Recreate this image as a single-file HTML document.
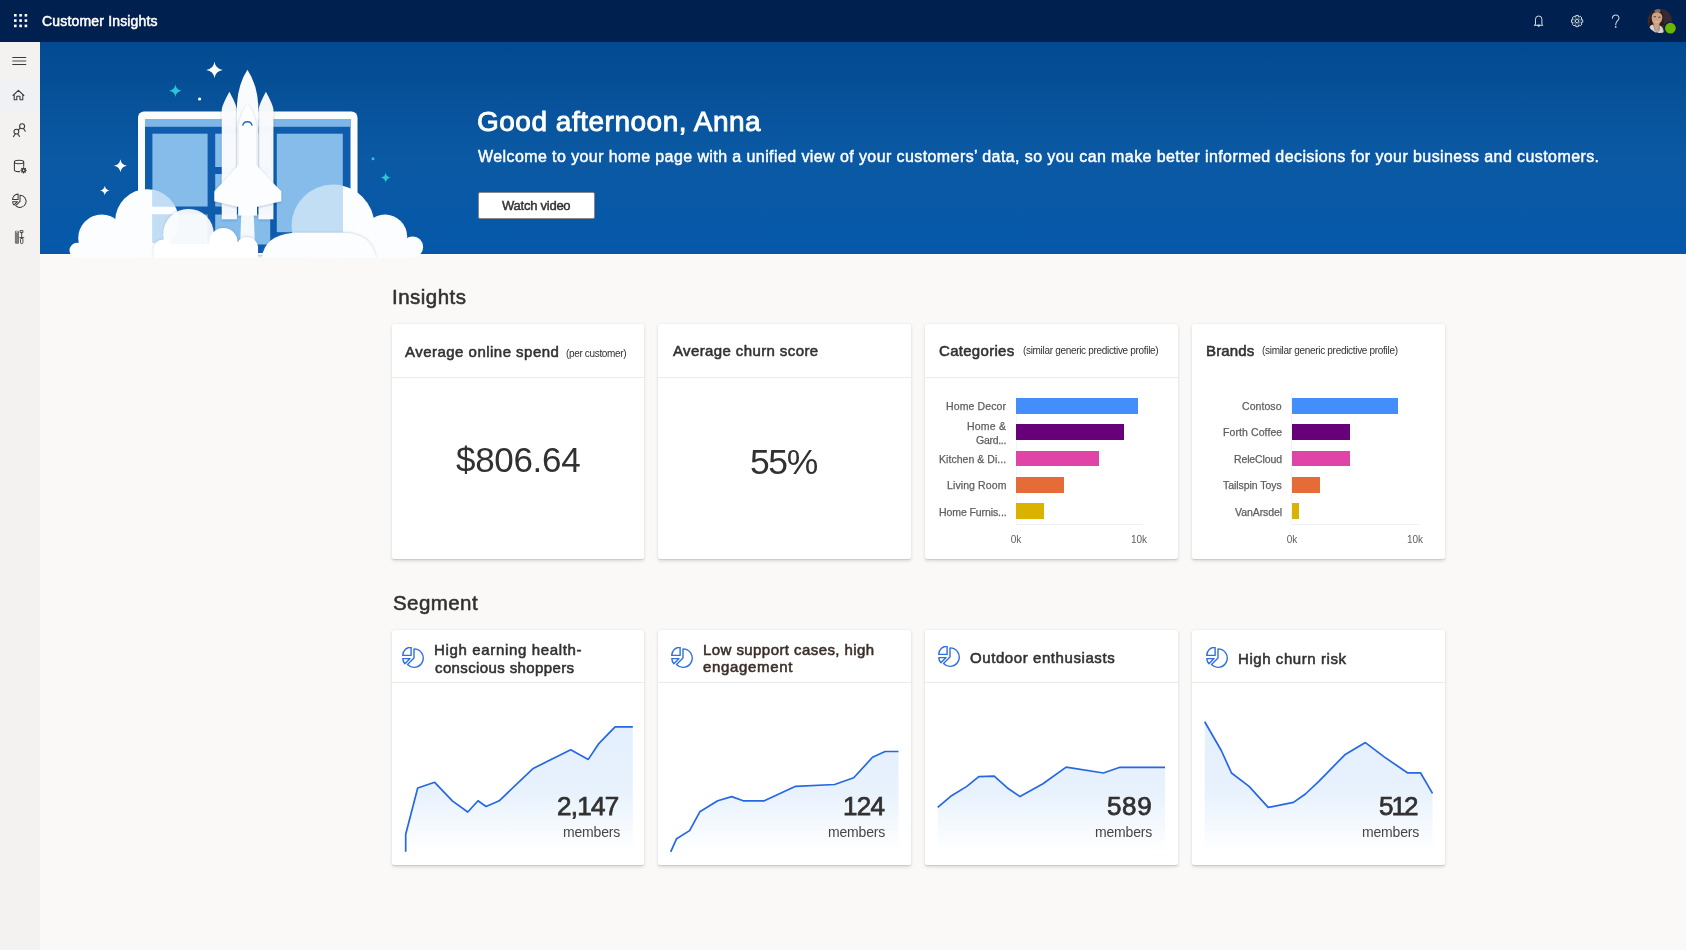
<!DOCTYPE html>
<html><head><meta charset="utf-8">
<style>
*{box-sizing:border-box;margin:0;padding:0}
html,body{width:1686px;height:950px;overflow:hidden;background:#faf9f8;font-family:"Liberation Sans",sans-serif;color:#323130}
.abs{position:absolute}
#top{position:absolute;left:0;top:0;width:1686px;height:42px;background:#00214f}
#nav{position:absolute;left:0;top:42px;width:39.5px;height:908px;background:#f3f2f1}
#navsel{position:absolute;left:0;top:36.4px;width:39.5px;height:35px;background:#eff1f4}
#hero{position:absolute;left:39.5px;top:42px;width:1646.5px;height:211.5px;background:linear-gradient(#034a90 0%,#0b59a4 55%,#0558a9 100%)}
.t{position:absolute;white-space:nowrap;line-height:1;will-change:transform}
.card{position:absolute;background:#fff;box-shadow:0 1.6px 3.6px rgba(0,0,0,.132),0 0.3px 0.9px rgba(0,0,0,.085);border-radius:2px}
.card .hd{position:absolute;left:0;right:0;top:0;border-bottom:1px solid #edebe9}
</style></head><body>
<div id="top"></div>
<div id="nav"><div id="navsel"></div></div>
<div id="hero"></div>
<svg class="abs" style="left:40px;top:42px" width="420" height="222" viewBox="40 42 420 222"><defs><clipPath id="pan"><rect x="152.4" y="133.7" width="55.2" height="72.8"/><rect x="152.4" y="214.5" width="55.2" height="30"/><rect x="215.2" y="133.7" width="55" height="33.3"/><rect x="215.2" y="174" width="55" height="32.5"/><rect x="215.2" y="214.5" width="55" height="30"/><rect x="276.8" y="133.7" width="66" height="98.5"/></clipPath><clipPath id="floor"><rect x="40" y="42" width="420" height="215.7"/></clipPath><filter id="sh" x="-10%" y="-10%" width="120%" height="130%"><feDropShadow dx="0" dy="0.8" stdDeviation="1.1" flood-color="#002e66" flood-opacity="0.30"/></filter><filter id="sh2" x="-10%" y="-20%" width="120%" height="140%"><feDropShadow dx="0" dy="-0.5" stdDeviation="1.0" flood-color="#5c7fa8" flood-opacity="0.35"/></filter></defs><g clip-path="url(#floor)"><path d="M214.5,61.7 Q215.5824,68.8176 222.7,69.9 Q215.5824,70.98240000000001 214.5,78.10000000000001 Q213.4176,70.98240000000001 206.3,69.9 Q213.4176,68.8176 214.5,61.7 Z" fill="#fff"/><path d="M175.4,84.5 Q176.2184,89.8816 181.6,90.7 Q176.2184,91.5184 175.4,96.9 Q174.5816,91.5184 169.20000000000002,90.7 Q174.5816,89.8816 175.4,84.5 Z" fill="#2bc3d6"/><path d="M120.4,159.3 Q121.25800000000001,164.942 126.9,165.8 Q121.25800000000001,166.65800000000002 120.4,172.3 Q119.542,166.65800000000002 113.9,165.8 Q119.542,164.942 120.4,159.3 Z" fill="#fff"/><path d="M104.8,185.7 Q105.4336,189.8664 109.6,190.5 Q105.4336,191.1336 104.8,195.3 Q104.1664,191.1336 100.0,190.5 Q104.1664,189.8664 104.8,185.7 Z" fill="#fff"/><path d="M385.7,172.4 Q386.3864,176.9136 390.9,177.6 Q386.3864,178.2864 385.7,182.79999999999998 Q385.0136,178.2864 380.5,177.6 Q385.0136,176.9136 385.7,172.4 Z" fill="#2bc3d6"/><circle cx="199.6" cy="99" r="1.6" fill="#fff"/><circle cx="373" cy="158.8" r="1.5" fill="#2bc3d6"/><path d="M138,255 V117.5 a6,6 0 0 1 6,-6 H351.5 a6,6 0 0 1 6,6 V255 Z" fill="#fbfcfe" filter="url(#sh)"/><rect x="145" y="119" width="205.5" height="134" fill="#0f5cad"/><rect x="145" y="119" width="205.5" height="7.8" fill="#7fb6e8"/><g fill="#fcfdfe"><circle cx="147" cy="221" r="31.8"/><circle cx="333" cy="226" r="41.5"/></g><g fill="#85bcea"><rect x="152.4" y="133.7" width="55.2" height="72.8"/><rect x="152.4" y="214.5" width="55.2" height="30"/><rect x="215.2" y="133.7" width="55" height="33.3"/><rect x="215.2" y="174" width="55" height="32.5"/><rect x="215.2" y="214.5" width="55" height="30"/><rect x="276.8" y="133.7" width="66" height="98.5"/></g><g clip-path="url(#pan)" fill="#ffffff" fill-opacity="0.5"><circle cx="147" cy="221" r="31.8"/><circle cx="333" cy="226" r="41.5"/></g><g filter="url(#sh)" fill="#fbfcfe" fill-opacity="0.965"><path d="M221.8,219.3 V109 Q222.4,104.5 229.4,91.7 Q236.2,104.5 236.9,109 V219.3 Z"/><path d="M258.5,219.3 V109 Q259.2,104.5 265.9,91.7 Q272.8,104.5 273.4,109 V219.3 Z"/></g><g filter="url(#sh)"><path d="M237.0,200 V104 Q238.2,84 247.4,69.8 Q256.8,84 258.2,104 V200 Z" fill="#fafbfd"/></g><g filter="url(#sh)"><path d="M247.4,104.6 Q254.6,112 256.4,127 V164.5 Q262,172 281.3,191.2 V201.3 L257.0,206.8 V215.6 H238.2 V206.8 L214.3,201.3 V191.2 Q233,172 238.6,164.5 V127 Q240.4,112 247.4,104.6 Z" fill="#fcfdfe"/></g><path d="M242.7,125.6 A4.8,4.8 0 0 1 252.1,125.6" fill="none" stroke="#1b6ec2" stroke-width="1.4"/><path d="M241.2,215 L239.5,262 H255.5 L253.8,215 Z" fill="#fff" fill-opacity="0.9"/><g fill="#fcfdfe"><circle cx="101.7" cy="238" r="23.5"/><circle cx="77.3" cy="250.6" r="7.8"/><rect x="77.3" y="243" width="93" height="20"/></g><g fill="#fcfdfe"><circle cx="385" cy="236.8" r="22.2"/><circle cx="412.6" cy="247" r="10.6"/><rect x="340" y="240" width="74" height="20"/></g><g filter="url(#sh2)"><path d="M262,258 Q264,236 292,233 H345 Q372,234 376,258 Z" fill="#fcfdfe"/></g><g filter="url(#sh2)"><circle cx="188.5" cy="234.2" r="25.3" fill="#ffffff" fill-opacity="0.91"/><path d="M153.5,258 V249 A9.5,9.5 0 0 1 172.5,249 H174 V258 Z M209.4,258 V242 A14,14 0 0 1 237.4,242 V258 Z M236,258 V248 A11,11 0 0 1 258,248 V258 Z M160,244 H250 V258 H160 Z" fill="#ffffff"/></g></g></svg>
<svg class="abs" style="left:0;top:0" width="42" height="42"><rect x="14.0" y="14.0" width="2.6" height="2.6" fill="#fff"/><rect x="14.0" y="19.3" width="2.6" height="2.6" fill="#fff"/><rect x="14.0" y="24.6" width="2.6" height="2.6" fill="#fff"/><rect x="19.3" y="14.0" width="2.6" height="2.6" fill="#fff"/><rect x="19.3" y="19.3" width="2.6" height="2.6" fill="#fff"/><rect x="19.3" y="24.6" width="2.6" height="2.6" fill="#fff"/><rect x="24.6" y="14.0" width="2.6" height="2.6" fill="#fff"/><rect x="24.6" y="19.3" width="2.6" height="2.6" fill="#fff"/><rect x="24.6" y="24.6" width="2.6" height="2.6" fill="#fff"/></svg>
<div class="t" style="left:42.2px;top:13.75px;font-size:14px;font-weight:400;color:#fff;letter-spacing:0.174px;-webkit-text-stroke:0.5px #fff;">Customer Insights</div>
<svg class="abs" style="left:1528px;top:11px" width="22" height="22" viewBox="0 0 22 22" fill="none" stroke="#d3dae5" stroke-width="1.0" stroke-linejoin="round" stroke-linecap="round">
<path d="M7.5,13.2 V8.2 A3.2,3.2 0 0 1 13.9,8.2 V13.2 L14.9,14.3 H6.5 Z"/><path d="M9.5,14.5 L10.7,15.6 L11.9,14.5 Z" fill="#d3dae5"/></svg>
<svg class="abs" style="left:1566px;top:10px" width="22" height="22" viewBox="0 0 22 22" fill="none" stroke="#d3dae5" stroke-width="1.0" stroke-linejoin="round"><path d="M15.20,9.75 L16.70,9.76 L16.70,12.34 L15.20,12.35 L14.92,13.03 L15.97,14.10 L14.15,15.92 L13.08,14.87 L12.40,15.15 L12.39,16.65 L9.81,16.65 L9.80,15.15 L9.12,14.87 L8.05,15.92 L6.23,14.10 L7.28,13.03 L7.00,12.35 L5.50,12.34 L5.50,9.76 L7.00,9.75 L7.28,9.07 L6.23,8.00 L8.05,6.18 L9.12,7.23 L9.80,6.95 L9.81,5.45 L12.39,5.45 L12.40,6.95 L13.08,7.23 L14.15,6.18 L15.97,8.00 L14.92,9.07 Z"/><circle cx="11.1" cy="11.05" r="1.7"/><circle cx="11.1" cy="11.05" r="3.0" stroke-opacity="0.35"/></svg>
<svg class="abs" style="left:1604px;top:10px" width="24" height="24" viewBox="1604 10 24 24" fill="none" stroke="#d3dae5" stroke-width="1.05" stroke-linecap="round"><path d="M1612.4,18.3 A3.3,3.1 0 1 1 1617.6,20.6 Q1615.7,22.2 1615.7,24.7"/><circle cx="1615.7" cy="26.9" r="0.35"/></svg>
<svg class="abs" style="left:1644px;top:6px" width="36" height="32" viewBox="0 0 36 32">
<defs><clipPath id="av"><circle cx="15.8" cy="14.9" r="12.2"/></clipPath></defs>
<g clip-path="url(#av)"><rect x="0" y="0" width="32" height="32" fill="#3a2830"/>
<path d="M6.2,13 Q5.6,4.4 13.4,3.6 Q20.2,4.2 19.4,13 L19.6,19 L17,19.6 L8,19.4 L5,19.6 Z" fill="#2c1b15"/>
<ellipse cx="13.5" cy="4.9" rx="3.0" ry="1.8" fill="#77716f"/>
<path d="M7.6,11.6 Q7.8,6.2 13.0,6.2 Q18.4,6.4 18.4,11.8 Q18.2,15.6 15.6,17.4 L15,21 L15.4,26.4 L10.8,26.4 L9.6,18 Q7.6,15.6 7.6,11.6 Z" fill="#cfa183"/>
<path d="M9.6,10.8 h2.4 M14.2,11.2 h2.4" stroke="#5a4038" stroke-width="1.1"/>
<path d="M10.6,15.3 Q12.8,16.8 15.2,15.5" stroke="#e6cfc2" stroke-width="0.7" fill="none"/>
<path d="M5.4,21.4 Q6.4,18.8 9.4,18.6 L11,24.5 L13.2,27.6 L15.4,24.0 L15.2,19.6 Q18.6,20 19.6,25 L19,28 L5,28 Z" fill="#d4d4d8"/>
<path d="M9.6,19 L11.2,25.4 M15.2,20 L14.6,25.4" stroke="#8c8a90" stroke-width="0.7"/>
</g>
<circle cx="26.4" cy="22.2" r="6.8" fill="#002050"/><circle cx="26.4" cy="22.2" r="5.4" fill="#6bb700"/></svg>
<svg class="abs" style="left:0;top:42px" width="40" height="220" viewBox="0 42 40 220" fill="none" stroke="#3b3a39" stroke-width="1.05" stroke-linecap="round" stroke-linejoin="round"><path d="M12.3,57.5 H26.2 M12.3,64.5 H26.2" stroke-linecap="butt"/><path d="M12.3,61 H26.2" stroke="#8a8886" stroke-width="1.6" stroke-linecap="butt"/><path d="M13.0,95.5 L18.4,90.3 L23.9,95.5 M14.2,94.6 V99.7 H16.8 V96.2 H20.0 V99.7 H22.8 V94.6"/><circle cx="22.1" cy="126.3" r="2.5"/><circle cx="16.4" cy="131.6" r="2.4"/><path d="M13.4,136.6 L15.3,134.0 M17.7,134.0 L19.6,136.4 M18.3,130.0 L20.2,128.2 M23.6,128.6 L25.3,131.2"/><path d="M14.4,162.0 V170.0 Q14.4,171.6 18.6,171.6 H19.6 M23.7,162.0 V166.2"/><ellipse cx="19.05" cy="162.0" rx="4.65" ry="1.7"/><circle cx="23.6" cy="170.3" r="1.6" stroke-width="1.5"/><path d="M23.6,167.6 V168.4 M23.6,172.2 V173 M20.9,170.3 H21.7 M25.5,170.3 H26.3 M21.7,168.4 L22.3,169 M24.9,171.6 L25.5,172.2 M25.5,168.4 L24.9,169 M22.3,171.6 L21.7,172.2" stroke-width="1.1"/><g transform="translate(12.1,194.0) scale(0.66)" stroke-width="1.55"><path d="M12,1.9 A9.2,9.2 0 1 1 5.5,17.6 L12,11.1 Z"/><path d="M9.1,0.2 V8.4 H0.7 A8.4,8.4 0 0 1 9.1,0.2 Z"/><path d="M8.0,11.6 H0.8 A8.2,8.2 0 0 0 2.9,16.7 Z"/></g><rect x="15.4" y="230.4" width="3.1" height="13.5" rx="1.3" fill="#807e7c" stroke="none"/><path d="M16.95,230.2 V232.6" stroke="#f3f2f1" stroke-width="0.9" stroke-linecap="butt"/><path d="M15.4,231.6 V243.2 M18.5,231.6 V243.2" stroke="#4a4846" stroke-width="0.6"/><rect x="20.5" y="230.6" width="2.4" height="2.0" stroke-width="0.9"/><path d="M21.7,232.6 V238 M19.7,237.6 H23.8" stroke-width="0.9"/><rect x="20.5" y="238.2" width="2.4" height="5.4" rx="1.1" stroke-width="0.9"/></svg>
<div class="t" style="left:476.8px;top:107.60px;font-size:28px;font-weight:400;color:#fff;letter-spacing:0.510px;-webkit-text-stroke:0.9px #fff;">Good afternoon, Anna</div>
<div class="t" style="left:478.0px;top:148.95px;font-size:16px;font-weight:400;color:#fff;letter-spacing:0.411px;-webkit-text-stroke:0.45px #fff;">Welcome to your home page with a unified view of your customers’ data, so you can make better informed decisions for your business and customers.</div>
<div class="abs" style="left:478.2px;top:191.6px;width:116.8px;height:27.3px;background:#fff;border:1px solid #8a8886;border-radius:2px"></div>
<div class="t" style="left:502.0px;top:198.79px;font-size:13px;font-weight:400;color:#323130;letter-spacing:-0.245px;-webkit-text-stroke:0.45px #323130;">Watch video</div>
<div class="t" style="left:392.2px;top:287.34px;font-size:20.5px;font-weight:400;color:#323130;letter-spacing:0.479px;-webkit-text-stroke:0.55px #323130;">Insights</div>
<div class="card" style="left:391.85px;top:324px;width:252.5px;height:234.7px"><div class="hd" style="height:54px"></div></div>
<div class="card" style="left:658.1px;top:324px;width:252.5px;height:234.7px"><div class="hd" style="height:54px"></div></div>
<div class="card" style="left:925.1px;top:324px;width:252.5px;height:234.7px"><div class="hd" style="height:54px"></div></div>
<div class="card" style="left:1192.1px;top:324px;width:252.5px;height:234.7px"></div>
<div class="t" style="left:405.4px;top:344.40px;font-size:15px;font-weight:400;color:#323130;letter-spacing:0.477px;-webkit-text-stroke:0.55px #323130;">Average online spend</div>
<div class="t" style="left:566.0px;top:348.53px;font-size:10px;font-weight:400;color:#323130;letter-spacing:-0.340px;">(per customer)</div>
<div class="t" style="left:672.6px;top:342.90px;font-size:15px;font-weight:400;color:#323130;letter-spacing:0.387px;-webkit-text-stroke:0.55px #323130;">Average churn score</div>
<div class="t" style="left:939.2px;top:342.80px;font-size:15px;font-weight:400;color:#323130;letter-spacing:0.295px;-webkit-text-stroke:0.55px #323130;">Categories</div>
<div class="t" style="left:1023.1px;top:345.83px;font-size:10px;font-weight:400;color:#323130;letter-spacing:-0.315px;">(similar generic predictive profile)</div>
<div class="t" style="left:1205.7px;top:342.80px;font-size:15px;font-weight:400;color:#323130;letter-spacing:0.154px;-webkit-text-stroke:0.55px #323130;">Brands</div>
<div class="t" style="left:1261.6px;top:345.83px;font-size:10px;font-weight:400;color:#323130;letter-spacing:-0.306px;">(similar generic predictive profile)</div>
<div class="t" style="left:456.2px;top:442.17px;font-size:35px;font-weight:400;color:#323130;letter-spacing:-0.320px;">$806.64</div>
<div class="t" style="left:750.2px;top:444.75px;font-size:35.5px;font-weight:400;color:#323130;letter-spacing:-1.426px;">55%</div>
<div class="abs" style="left:1015.5px;top:394px;width:1px;height:130px;background:#f5f4f3"></div><div class="abs" style="left:1016px;top:523.6px;width:126.90000000000009px;height:1px;background:#f1f0ef"></div><div class="abs" style="left:1016px;top:397.9px;width:122.0px;height:15.8px;background:#448efc"></div><div class="abs" style="left:1016px;top:424.2px;width:107.9px;height:15.8px;background:#68007a"></div><div class="abs" style="left:1016px;top:450.5px;width:83.2px;height:15.8px;background:#e044a7"></div><div class="abs" style="left:1016px;top:477.0px;width:48.1px;height:15.8px;background:#e66c37"></div><div class="abs" style="left:1016px;top:503.1px;width:28.0px;height:15.8px;background:#d9b300"></div><div class="t" style="right:679.58px;text-align:right;top:400.91px;font-size:10.5px;font-weight:400;color:#605e5c;letter-spacing:0.118px;-webkit-text-stroke:0.25px #605e5c;">Home Decor</div><div class="t" style="right:679.51px;text-align:right;top:420.61px;font-size:10.5px;font-weight:400;color:#605e5c;letter-spacing:0.194px;-webkit-text-stroke:0.25px #605e5c;">Home &amp;</div><div class="t" style="right:679.98px;text-align:right;top:434.81px;font-size:10.5px;font-weight:400;color:#605e5c;letter-spacing:-0.282px;-webkit-text-stroke:0.25px #605e5c;">Gard...</div><div class="t" style="right:679.66px;text-align:right;top:454.21px;font-size:10.5px;font-weight:400;color:#605e5c;letter-spacing:0.041px;-webkit-text-stroke:0.25px #605e5c;">Kitchen &amp; Di...</div><div class="t" style="right:679.60px;text-align:right;top:480.11px;font-size:10.5px;font-weight:400;color:#605e5c;letter-spacing:0.104px;-webkit-text-stroke:0.25px #605e5c;">Living Room</div><div class="t" style="right:679.79px;text-align:right;top:506.71px;font-size:10.5px;font-weight:400;color:#605e5c;letter-spacing:-0.089px;-webkit-text-stroke:0.25px #605e5c;">Home Furnis...</div><div class="t" style="left:916px;width:200px;top:534.53px;font-size:10px;font-weight:400;color:#605e5c;letter-spacing:0px;text-align:center;">0k</div><div class="t" style="left:1038.9px;width:200px;top:534.53px;font-size:10px;font-weight:400;color:#605e5c;letter-spacing:0px;text-align:center;">10k</div>
<div class="abs" style="left:1291.3px;top:394px;width:1px;height:130px;background:#f5f4f3"></div><div class="abs" style="left:1291.8px;top:523.6px;width:127.0px;height:1px;background:#f1f0ef"></div><div class="abs" style="left:1291.8px;top:397.9px;width:106.1px;height:15.8px;background:#448efc"></div><div class="abs" style="left:1291.8px;top:424.2px;width:58.0px;height:15.8px;background:#68007a"></div><div class="abs" style="left:1291.8px;top:450.5px;width:58.0px;height:15.8px;background:#e044a7"></div><div class="abs" style="left:1291.8px;top:477.0px;width:28.0px;height:15.8px;background:#e66c37"></div><div class="abs" style="left:1291.8px;top:503.1px;width:7.1px;height:15.8px;background:#d9b300"></div><div class="t" style="right:404.03px;text-align:right;top:400.91px;font-size:10.5px;font-weight:400;color:#605e5c;letter-spacing:0.065px;-webkit-text-stroke:0.25px #605e5c;">Contoso</div><div class="t" style="right:404.01px;text-align:right;top:427.01px;font-size:10.5px;font-weight:400;color:#605e5c;letter-spacing:0.093px;-webkit-text-stroke:0.25px #605e5c;">Forth Coffee</div><div class="t" style="right:404.23px;text-align:right;top:453.51px;font-size:10.5px;font-weight:400;color:#605e5c;letter-spacing:-0.129px;-webkit-text-stroke:0.25px #605e5c;">ReleCloud</div><div class="t" style="right:404.15px;text-align:right;top:480.11px;font-size:10.5px;font-weight:400;color:#605e5c;letter-spacing:-0.053px;-webkit-text-stroke:0.25px #605e5c;">Tailspin Toys</div><div class="t" style="right:404.16px;text-align:right;top:506.71px;font-size:10.5px;font-weight:400;color:#605e5c;letter-spacing:-0.058px;-webkit-text-stroke:0.25px #605e5c;">VanArsdel</div><div class="t" style="left:1191.5px;width:200px;top:534.53px;font-size:10px;font-weight:400;color:#605e5c;letter-spacing:0px;text-align:center;">0k</div><div class="t" style="left:1314.5px;width:200px;top:534.53px;font-size:10px;font-weight:400;color:#605e5c;letter-spacing:0px;text-align:center;">10k</div>
<div class="t" style="left:392.8px;top:592.64px;font-size:20.5px;font-weight:400;color:#323130;letter-spacing:0.425px;-webkit-text-stroke:0.55px #323130;">Segment</div>
<div class="card" style="left:391.85px;top:630px;width:252.5px;height:234.6px"><div class="hd" style="height:53px"></div></div>
<div class="card" style="left:658.1px;top:630px;width:252.5px;height:234.6px"><div class="hd" style="height:53px"></div></div>
<div class="card" style="left:925.1px;top:630px;width:252.5px;height:234.6px"><div class="hd" style="height:53px"></div></div>
<div class="card" style="left:1192.1px;top:630px;width:252.5px;height:234.6px"><div class="hd" style="height:53px"></div></div>
<svg class="abs" style="left:401.8px;top:647.0px" width="23" height="23" viewBox="0 0 23 23" fill="none" stroke="#2f6fe4" stroke-width="1.4" stroke-linejoin="round"><path d="M12,1.9 A9.2,9.2 0 1 1 5.5,17.6 L12,11.1 Z"/><path d="M9.1,0.2 V8.4 H0.7 A8.4,8.4 0 0 1 9.1,0.2 Z"/><path d="M8.0,11.6 H0.8 A8.2,8.2 0 0 0 2.9,16.7 Z"/></svg>
<svg class="abs" style="left:670.5px;top:646.5px" width="23" height="23" viewBox="0 0 23 23" fill="none" stroke="#2f6fe4" stroke-width="1.4" stroke-linejoin="round"><path d="M12,1.9 A9.2,9.2 0 1 1 5.5,17.6 L12,11.1 Z"/><path d="M9.1,0.2 V8.4 H0.7 A8.4,8.4 0 0 1 9.1,0.2 Z"/><path d="M8.0,11.6 H0.8 A8.2,8.2 0 0 0 2.9,16.7 Z"/></svg>
<svg class="abs" style="left:937.5px;top:645.7px" width="23" height="23" viewBox="0 0 23 23" fill="none" stroke="#2f6fe4" stroke-width="1.4" stroke-linejoin="round"><path d="M12,1.9 A9.2,9.2 0 1 1 5.5,17.6 L12,11.1 Z"/><path d="M9.1,0.2 V8.4 H0.7 A8.4,8.4 0 0 1 9.1,0.2 Z"/><path d="M8.0,11.6 H0.8 A8.2,8.2 0 0 0 2.9,16.7 Z"/></svg>
<svg class="abs" style="left:1206.0px;top:646.8px" width="23" height="23" viewBox="0 0 23 23" fill="none" stroke="#2f6fe4" stroke-width="1.4" stroke-linejoin="round"><path d="M12,1.9 A9.2,9.2 0 1 1 5.5,17.6 L12,11.1 Z"/><path d="M9.1,0.2 V8.4 H0.7 A8.4,8.4 0 0 1 9.1,0.2 Z"/><path d="M8.0,11.6 H0.8 A8.2,8.2 0 0 0 2.9,16.7 Z"/></svg>
<div class="t" style="left:434.1px;top:642.00px;font-size:15px;font-weight:400;color:#323130;letter-spacing:0.658px;-webkit-text-stroke:0.55px #323130;">High earning health-</div>
<div class="t" style="left:434.6px;top:659.90px;font-size:15px;font-weight:400;color:#323130;letter-spacing:0.384px;-webkit-text-stroke:0.55px #323130;">conscious shoppers</div>
<div class="t" style="left:702.7px;top:641.60px;font-size:15px;font-weight:400;color:#3b2e28;letter-spacing:0.429px;-webkit-text-stroke:0.55px #3b2e28;">Low support cases, high</div>
<div class="t" style="left:702.9px;top:659.30px;font-size:15px;font-weight:400;color:#3b2e28;letter-spacing:0.677px;-webkit-text-stroke:0.55px #3b2e28;">engagement</div>
<div class="t" style="left:969.9px;top:650.10px;font-size:15px;font-weight:400;color:#323130;letter-spacing:0.581px;-webkit-text-stroke:0.55px #323130;">Outdoor enthusiasts</div>
<div class="t" style="left:1238.4px;top:650.90px;font-size:15px;font-weight:400;color:#323130;letter-spacing:0.569px;-webkit-text-stroke:0.55px #323130;">High churn risk</div>
<svg class="abs" style="left:0;top:0" width="1686" height="950" viewBox="0 0 1686 950"><defs><linearGradient id="ag" gradientUnits="userSpaceOnUse" x1="0" y1="720" x2="0" y2="852"><stop offset="0" stop-color="#e3effd"/><stop offset="0.55" stop-color="#e8f2fd"/><stop offset="1" stop-color="#ffffff"/></linearGradient></defs><path d="M405.7,851.8 L405.7,834.2 L417.7,788.0 L434.7,782.3 L452.6,801.1 L467.8,812.0 L478.0,800.8 L486.1,806.5 L499.2,800.8 L533.2,768.4 L570.7,749.8 L588.3,759.4 L599.0,743.3 L615.1,726.8 L632.8,726.8 L632.8,852 L405.7,852 Z" fill="url(#ag)"/><path d="M405.7,851.8 L405.7,834.2 L417.7,788.0 L434.7,782.3 L452.6,801.1 L467.8,812.0 L478.0,800.8 L486.1,806.5 L499.2,800.8 L533.2,768.4 L570.7,749.8 L588.3,759.4 L599.0,743.3 L615.1,726.8 L632.8,726.8" fill="none" stroke="#2568e4" stroke-width="1.7" stroke-linejoin="round"/><path d="M670.7,851.8 L676.6,838.7 L689.6,830.6 L699.8,811.8 L717.7,800.8 L731.7,796.6 L743.2,800.8 L764.3,800.8 L795.6,786.3 L834.6,784.5 L853.7,777.8 L872.5,757.3 L885.1,751.5 L898.5,751.5 L898.5,852 L670.7,852 Z" fill="url(#ag)"/><path d="M670.7,851.8 L676.6,838.7 L689.6,830.6 L699.8,811.8 L717.7,800.8 L731.7,796.6 L743.2,800.8 L764.3,800.8 L795.6,786.3 L834.6,784.5 L853.7,777.8 L872.5,757.3 L885.1,751.5 L898.5,751.5" fill="none" stroke="#2568e4" stroke-width="1.7" stroke-linejoin="round"/><path d="M937.7,807.4 L950.7,796.3 L966.8,786.4 L978.8,776.6 L994.2,776.1 L1007.1,787.7 L1020.0,796.6 L1042.9,783.8 L1066.2,767.1 L1103.4,773.0 L1119.9,767.3 L1165.0,767.3 L1165.0,852 L937.7,852 Z" fill="url(#ag)"/><path d="M937.7,807.4 L950.7,796.3 L966.8,786.4 L978.8,776.6 L994.2,776.1 L1007.1,787.7 L1020.0,796.6 L1042.9,783.8 L1066.2,767.1 L1103.4,773.0 L1119.9,767.3 L1165.0,767.3" fill="none" stroke="#2568e4" stroke-width="1.7" stroke-linejoin="round"/><path d="M1204.7,721.8 L1221.3,750.5 L1231.5,773.0 L1249.1,786.4 L1268.2,807.4 L1293.4,802.4 L1305.4,794.0 L1318.8,781.4 L1344.8,754.8 L1365.4,742.6 L1384.2,756.9 L1407.4,772.8 L1420.5,772.8 L1432.5,793.4 L1432.5,852 L1204.7,852 Z" fill="url(#ag)"/><path d="M1204.7,721.8 L1221.3,750.5 L1231.5,773.0 L1249.1,786.4 L1268.2,807.4 L1293.4,802.4 L1305.4,794.0 L1318.8,781.4 L1344.8,754.8 L1365.4,742.6 L1384.2,756.9 L1407.4,772.8 L1420.5,772.8 L1432.5,793.4" fill="none" stroke="#2568e4" stroke-width="1.7" stroke-linejoin="round"/></svg>
<div class="t" style="left:556.6999999999999px;top:793.39px;font-size:26px;font-weight:400;color:#323130;letter-spacing:-0.716px;-webkit-text-stroke:0.75px #323130;">2,147</div>
<div class="t" style="left:562.7px;top:825.05px;font-size:14px;font-weight:400;color:#484644;letter-spacing:-0.175px;">members</div>
<div class="t" style="left:842.9px;top:793.39px;font-size:26px;font-weight:400;color:#323130;letter-spacing:-0.691px;-webkit-text-stroke:0.75px #323130;">124</div>
<div class="t" style="left:827.8px;top:825.05px;font-size:14px;font-weight:400;color:#484644;letter-spacing:-0.175px;">members</div>
<div class="t" style="left:1107.2px;top:793.39px;font-size:26px;font-weight:400;color:#323130;letter-spacing:0.659px;-webkit-text-stroke:0.75px #323130;">589</div>
<div class="t" style="left:1094.8px;top:825.05px;font-size:14px;font-weight:400;color:#484644;letter-spacing:-0.175px;">members</div>
<div class="t" style="left:1378.7px;top:793.39px;font-size:26px;font-weight:400;color:#323130;letter-spacing:-1.991px;-webkit-text-stroke:0.75px #323130;">512</div>
<div class="t" style="left:1361.8px;top:825.05px;font-size:14px;font-weight:400;color:#484644;letter-spacing:-0.175px;">members</div>
</body></html>
